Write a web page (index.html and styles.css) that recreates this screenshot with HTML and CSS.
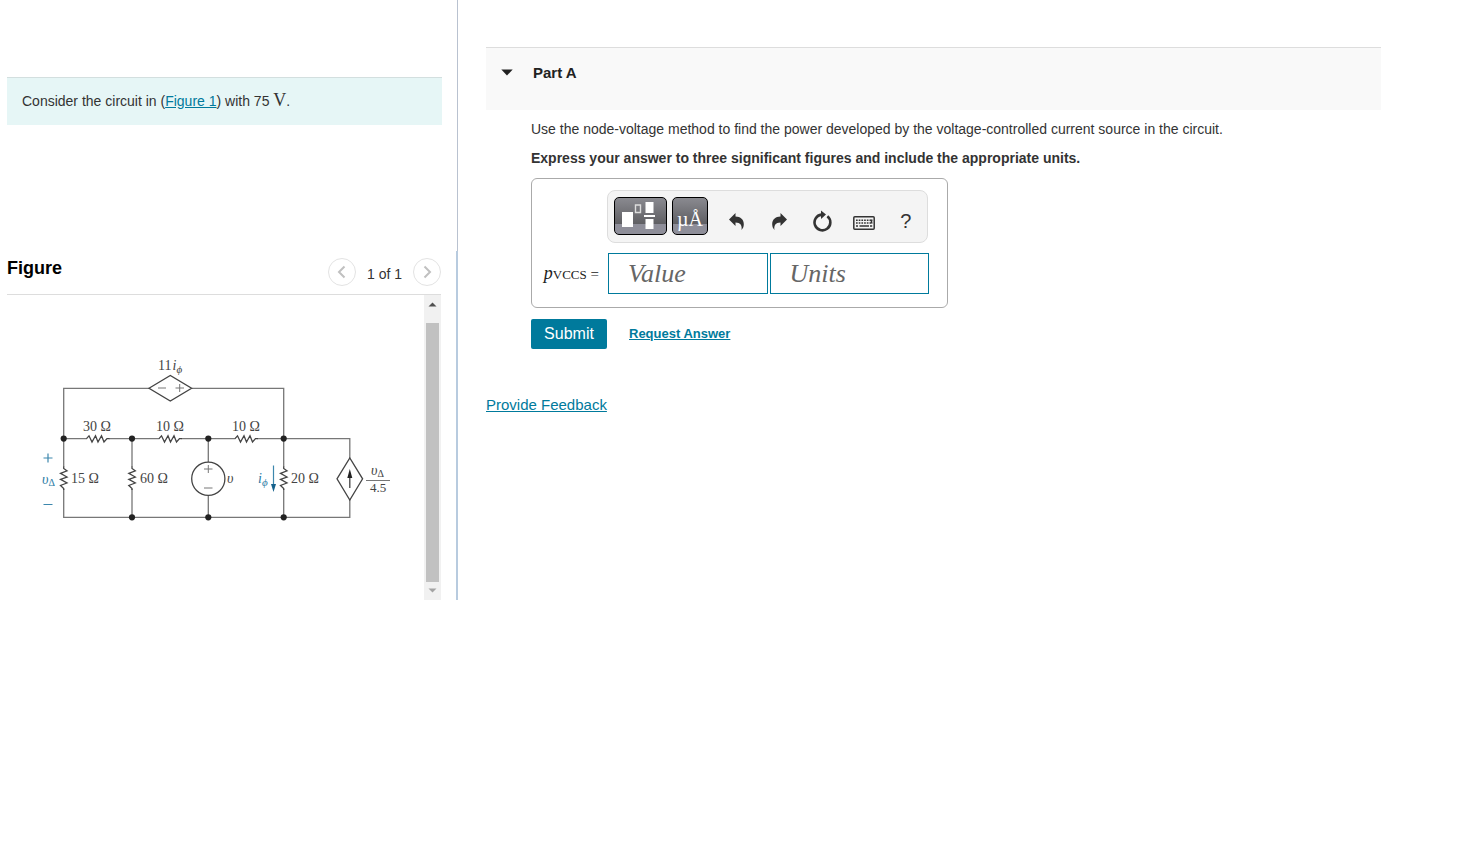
FILE: index.html
```html
<!DOCTYPE html>
<html lang="en">
<head>
<meta charset="utf-8">
<title>Part A</title>
<meta name="viewport" content="width=device-width, initial-scale=1">
<link rel="stylesheet" href="styles.css">
</head>
<body>
<div class="page">
  <aside class="side">
    <section class="intro">
      <p class="prompt">Consider the circuit in (<a href="#figure">Figure 1</a>) with 75 <span class="unit">V</span>.</p>
    </section>
    <section class="figure" id="figure">
      <header class="figure-head">
        <h2>Figure</h2>
        <nav class="pager" aria-label="Figures">
          <button type="button" aria-label="Previous figure"><svg width="12" height="14" viewBox="0 0 12 14"><path d="M8.500 1.500 3 7l5.500 5.500"/></svg></button>
          <span>1 of 1</span>
          <button type="button" aria-label="Next figure"><svg width="12" height="14" viewBox="0 0 12 14"><path d="M3.500 1.500 9 7l-5.500 5.500"/></svg></button>
        </nav>
      </header>
      <div class="viewer">
        <div class="canvas">
          <svg class="circuit" width="375" height="180" viewBox="30 350 375 180" role="img" aria-label="Circuit diagram">
            <g class="wire">
              <path d="M63.700 467V388.300H149M192 388.300H283.700V467M63.700 438.600H87M109 438.600H159.500M181.500 438.600H235.500M257.500 438.600H349.800V458M349.800 499V517.300H63.700V489M132 438.600V467M132 489V517.300M208.300 438.600V462M208.300 496V517.300M283.700 489V517.300"/>
            </g>
            <g class="part">
              <path d="M149 388.300 170.300 375.500 191.600 388.300 170.300 401Z"/>
              <path d="M337 478.800 349.800 458 362.600 478.800 349.800 500Z"/>
              <circle cx="208.300" cy="478.800" r="16.600"/>
              <path d="M86.500 438.600 89 435.800 92 442 95.500 435.800 98 442 101.500 435.800 104 442 107 438.600H109.500"/>
              <path d="M159 438.600 161.500 435.800 164.500 442 168 435.800 170.500 442 174 435.800 176.500 442 179.500 438.600H182"/>
              <path d="M235 438.600 237.500 435.800 240.500 442 244 435.800 246.500 442 250 435.800 252.500 442 255.500 438.600H258"/>
              <path d="M63.700 466.500V468.500L67 470.800 60.500 473.300 67 477 60.500 479.300 67 483 60.500 485.500 63.700 488.500V490"/>
              <path d="M132 466.500V468.500L135.300 470.800 128.800 473.300 135.300 477 128.800 479.300 135.300 483 128.800 485.500 132 488.500V490"/>
              <path d="M283.700 466.500V468.500L287 470.800 280.500 473.300 287 477 280.500 479.300 287 483 280.500 485.500 283.700 488.500V490"/>
              <path d="M349.800 488V477"/>
            </g>
            <g class="sign">
              <path d="M158 388H166M175.500 388H184M179.700 384V392M204 469H212.500M208.300 465V473M204 488H212.500"/>
            </g>
            <path class="bar" d="M366 480.500H390"/>
            <g class="node">
              <circle cx="63.700" cy="438.600" r="3.100"/><circle cx="132" cy="438.600" r="3.100"/><circle cx="208.300" cy="438.600" r="3.100"/><circle cx="283.700" cy="438.600" r="3.100"/>
              <circle cx="132" cy="517.300" r="3.100"/><circle cx="208.300" cy="517.300" r="3.100"/><circle cx="283.700" cy="517.300" r="3.100"/>
              <path d="M349.800 469 352.300 478H347.300Z"/>
            </g>
            <path class="mark" d="M43.500 458H52.500M48 453.500V462.500M43.500 504.500H52.500M273.500 465.500V485"/>
            <path class="tip" d="M271 484H276L273.500 492Z"/>
            <g class="text">
              <text x="158" y="370">11<tspan class="i" dx="1">i</tspan><tspan class="s" dy="3">ϕ</tspan></text>
              <text x="83" y="431">30 Ω</text>
              <text x="156" y="431">10 Ω</text>
              <text x="232" y="431">10 Ω</text>
              <text x="71" y="483">15 Ω</text>
              <text x="140" y="483">60 Ω</text>
              <text x="291" y="483">20 Ω</text>
              <text class="i" x="227" y="483">υ</text>
              <text class="i" x="371" y="475">υ<tspan class="d" dy="2">Δ</tspan></text>
              <text class="q" x="370" y="492">4.5</text>
              <text class="blue" x="42" y="484"><tspan class="i">υ</tspan><tspan class="d" dy="2">Δ</tspan></text>
              <text class="blue" x="258" y="483"><tspan class="i">i</tspan><tspan class="s" dy="3">ϕ</tspan></text>
            </g>
          </svg>
        </div>
        <div class="scroll" aria-hidden="true">
          <svg width="9" height="5" viewBox="0 0 9 5"><path fill="#505050" d="M.5 4.500 4.500.5 8.500 4.500Z"/></svg>
          <div class="thumb"></div>
          <svg width="9" height="5" viewBox="0 0 9 5"><path fill="#a3a3a3" d="M.5.5 4.500 4.500 8.500.5Z"/></svg>
        </div>
      </div>
    </section>
  </aside>

  <main class="main">
    <header class="part-head">
      <svg width="12" height="7" viewBox="0 0 12 7"><path fill="#222" d="M.3.500H11.700L6 6.500Z"/></svg>
      <h1>Part A</h1>
    </header>
    <form class="answer" id="answer">
      <p class="question">Use the node-voltage method to find the power developed by the voltage-controlled current source in the circuit.</p>
      <p class="question strong">Express your answer to three significant figures and include the appropriate units.</p>
      <div class="box">
        <div class="tools">
          <button type="button" class="dark wide" aria-label="Templates">
            <svg width="34" height="28" viewBox="0 0 34 28"><path fill="#fff" d="M0 10h11v15H0zM23.500 0h8v11h-8zM23.500 17h8v10h-8zM22 13h11v2H22z"/><path fill="none" stroke="#ddd" stroke-width="1.400" d="M13.500 3h5v7.500h-5z"/></svg>
          </button>
          <button type="button" class="dark units">µÅ</button>
          <button type="button" class="plain" aria-label="Undo"><svg width="20" height="22" viewBox="0 0 20 22"><path fill="#333" d="M2 9.500 8.500 3v3.500c5 0 8.500 3 8.300 8-.1 2.500-1 4-2.300 5.500.8-4.500-1-7.500-6-7.500v3.500Z"/></svg></button>
          <button type="button" class="plain" aria-label="Redo"><svg width="20" height="22" viewBox="0 0 20 22"><path fill="#333" d="M18 9.500 11.500 3v3.500c-5 0-8.500 3-8.300 8 .1 2.500 1 4 2.300 5.500-.8-4.500 1-7.500 6-7.500v3.500Z"/></svg></button>
          <button type="button" class="plain" aria-label="Reset"><svg width="20" height="22" viewBox="0 0 20 22"><path fill="none" stroke="#333" stroke-width="2.600" d="M15.400 6.300A7.900 7.900 0 1 1 9.500 4.600"/><path fill="#333" d="M9 .5 14 4.500 9 9Z"/></svg></button>
          <button type="button" class="plain" aria-label="Keyboard"><svg class="keys" width="22" height="14" viewBox="0 0 22 14"><rect x=".8" y=".8" width="20.400" height="12.400" rx="1" fill="none" stroke="#333" stroke-width="1.500"/><path fill="none" stroke="#333" stroke-width="1.500" stroke-dasharray="1.700 1" d="M3 4.200h16.500M3 7h16.500"/><path fill="none" stroke="#333" stroke-width="1.500" d="M3 10h2M6.500 10h9.500M17 10h2.200M18.500 3.500v4"/></svg></button>
          <button type="button" class="plain help" aria-label="Help">?</button>
        </div>
        <label class="name" for="value"><i>p</i><span>VCCS</span> =</label>
        <div class="fields">
          <input id="value" type="text" placeholder="Value">
          <input type="text" placeholder="Units" aria-label="Units">
        </div>
      </div>
      <div class="actions">
        <button type="submit" class="submit">Submit</button>
        <a href="#answer">Request Answer</a>
      </div>
    </form>
    <a class="feedback" href="#feedback">Provide Feedback</a>
  </main>
</div>
</body>
</html>
```

FILE: styles.css
```css
* { box-sizing: border-box; }

body {
  margin: 0;
  background: #fff;
  color: #333;
  font: 14px/20px "Liberation Sans", Arial, sans-serif;
}

h1, h2, p { margin: 0; }
a { color: #007a9c; }
button { padding: 0; font-family: inherit; }

.page {
  display: grid;
  grid-template-columns: 458px 1fr;
  align-items: start;
}

.intro {
  min-height: 251px;
  padding: 77px 15px 0 7px;
  border-right: 1px solid #b9c2d0;
}

.prompt {
  padding: 13px 15px 14px;
  background: #e6f6f6;
  border-top: 1px solid #d3dfdf;
}

.unit { font: 18px/14px "Liberation Serif", serif; }

.figure {
  padding: 7px 15px 0 7px;
  border-right: 2px solid #b8cbdf;
}

.figure-head {
  display: flex;
  justify-content: space-between;
  align-items: center;
  padding-bottom: 8px;
  border-bottom: 1px solid #ddd;
}

h2 {
  padding-bottom: 8px;
  color: #000;
  font-size: 18px;
  line-height: 20px;
}

.pager {
  display: flex;
  align-items: center;
  gap: 11px;
}

.pager span { padding-top: 4px; }

.pager button {
  display: grid;
  place-items: center;
  width: 28px;
  height: 28px;
  background: #fff;
  border: 1px solid #e3e3e3;
  border-radius: 50%;
}

.pager path { fill: none; stroke: #c0c0c0; stroke-width: 2; }

.viewer { display: flex; }

.canvas {
  flex: 1;
  min-width: 0;
  padding: 55px 0 70px 23px;
}

.circuit { display: block; }
.wire path { fill: none; stroke: #777; stroke-width: 1.300; }
.part path, .part circle { fill: none; stroke: #444; stroke-width: 1.300; }
.sign path, .bar { fill: none; stroke: #777; stroke-width: 1; }
.node { fill: #222; }
.mark { fill: none; stroke: #3c87ad; stroke-width: 1.200; }
.tip { fill: #14618c; }
.text { fill: #444; font: 14px "Liberation Serif", serif; }
.text .i { font-style: italic; }
.text .s { font-size: 11px; font-style: italic; }
.text .d { font-size: 10px; font-style: normal; }
.text .q { font-size: 13px; }
.text .blue { fill: #2b7ba5; }

.scroll {
  display: flex;
  flex-direction: column;
  align-items: center;
  gap: 6px;
  width: 17px;
  padding: 7px 0;
  background: #f1f1f1;
}

.scroll svg { flex: none; }
.thumb { flex: 1; width: 13px; margin-top: 10px; background: #c1c1c1; }

.main { padding: 47px 78px 0 28px; }

.part-head {
  display: flex;
  gap: 20px;
  min-height: 63px;
  padding: 15px;
  background: #f9f9f9;
  border-top: 1px solid #ddd;
}

.part-head svg { margin-top: 6px; }
h1 { color: #222; font-size: 15px; line-height: 20px; }

.answer { padding: 9px 0 0 45px; }
.question { margin-bottom: 9px; }
.strong { margin-bottom: 10px; font-weight: bold; }

.box {
  display: grid;
  grid-template-columns: 76px 321px;
  row-gap: 10px;
  align-items: center;
  width: fit-content;
  padding: 11px 18px 13px 0;
  border: 1px solid #aaa;
  border-radius: 6px;
}

.tools {
  grid-column: 2;
  display: flex;
  align-items: center;
  height: 53px;
  margin: 0 1px 0 -1px;
  padding: 0 0 1px 6px;
  background: #f4f4f4;
  border: 1px solid #ddd;
  border-radius: 8px;
}

.dark {
  display: grid;
  place-items: center;
  height: 38px;
  background: linear-gradient(#8a8a90, #5f5f63 72%, #8e8e99 73%);
  border: 1px solid #000;
  border-radius: 5px;
}

.wide { width: 53px; }
.wide svg { margin-right: 3px; }

.units {
  width: 36px;
  margin: 0 8px 0 5px;
  padding-top: 6px;
  color: #fff;
  font: 20px/24px "Liberation Serif", serif;
}

.plain {
  display: grid;
  place-items: center;
  flex: 1;
  height: 38px;
  padding-top: 10px;
  background: none;
  border: 0;
  color: #333;
}

.keys { margin-top: 4px; }
.help { font-size: 20px; }

.name {
  justify-self: end;
  padding-right: 9px;
  font: 15px/20px "Liberation Serif", serif;
  color: #222;
  white-space: nowrap;
}

.name i { font-size: 18px; }
.name span { font-size: 13px; }

.fields {
  display: grid;
  grid-template-columns: 1fr 1fr;
  gap: 2px;
}

.fields input {
  min-width: 0;
  height: 41px;
  padding: 0 19px;
  background: #fff;
  border: 1px solid #007a9c;
  border-radius: 0;
  font: italic 26px/32px "Liberation Serif", serif;
}

.fields input::placeholder { color: #666; }

.actions {
  display: flex;
  align-items: center;
  gap: 22px;
  margin-top: 11px;
}

.actions a { font-size: 13px; font-weight: bold; }

.submit {
  width: 76px;
  height: 30px;
  background: #007a9c;
  border: 0;
  border-radius: 2px;
  color: #fff;
  font-size: 16px;
}

.feedback {
  display: inline-block;
  margin-top: 46px;
  font-size: 15px;
}
```
